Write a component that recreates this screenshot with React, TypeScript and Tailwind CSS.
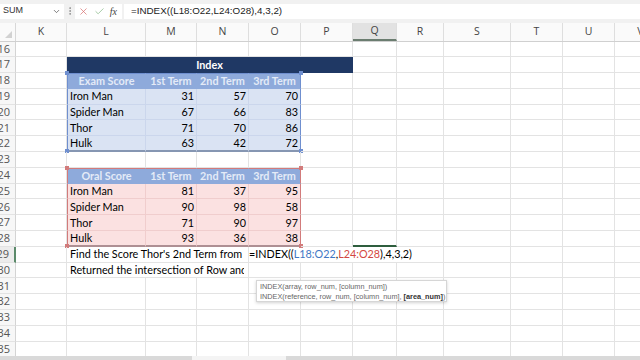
import type { ReactNode } from "react";
import clsx from "clsx";
import { twMerge } from "tailwind-merge";
import { X, Check, ChevronDown, EllipsisVertical } from "lucide-react";

const cn = (...a: (string | false | undefined)[]) => twMerge(clsx(a));

const W: Record<string, string> = {
  K: "w-[51px]",
  L: "w-[79px]",
  M: "w-[51px]",
  N: "w-[52px]",
  O: "w-[52px]",
  P: "w-[52px]",
  Q: "w-[44px]",
  R: "w-[47px]",
  S: "w-[67px]",
  T: "w-[52px]",
  U: "w-[52px]",
  V: "w-[52px]",
};
const COLS = Object.keys(W);

function Cell({ w, className, children }: { w: string; className?: string; children?: ReactNode }) {
  return (
    <div className={cn("relative shrink-0 h-full flex items-center border-r border-b border-[#e3e3e3] whitespace-nowrap", w, className)}>
      {children}
    </div>
  );
}

function blanks(keys: string[]) {
  return keys.map((k) => <Cell key={k} w={W[k]} />);
}

function Row({ n, children, active }: { n: number; children: ReactNode; active?: boolean }) {
  return (
    <div className="flex h-[15.8px]">
      <div
        className={cn(
          "shrink-0 w-[16px] h-full flex items-center justify-end pr-[5px] overflow-hidden bg-[#f7f7f7] border-r border-b border-r-[#d4d4d4] border-b-[#e3e3e3] text-[11px] text-[#555] font-['Open_Sans',sans-serif]",
          active && "border-r-2 border-r-[#5b8a6a] bg-[#ececec]"
        )}
      >
        {n}
      </div>
      {children}
    </div>
  );
}

type Theme = { body: string; line: string; edgeL: string; edgeR: string; edgeT: string; bottom: string; dot: string };

const blue: Theme = {
  body: "bg-[#dae3f3]",
  line: "border-[#cbd6ec]",
  edgeL: "border-l border-l-[#6f8fcf]",
  edgeR: "border-r border-r-[#6f8fcf]",
  edgeT: "border-t border-t-[#6f8fcf]",
  bottom: "border-b-2 border-b-[#8696b2]",
  dot: "bg-[#6f8fcf]",
};
const red: Theme = {
  body: "bg-[#fbe1e1]",
  line: "border-[#f0cdcd]",
  edgeL: "border-l border-l-[#d27b7b]",
  edgeR: "border-r border-r-[#d27b7b]",
  edgeT: "border-t border-t-[#d27b7b]",
  bottom: "border-b-2 border-b-[#ae8f93]",
  dot: "bg-[#d27b7b]",
};

function HeaderRow({ n, t, title }: { n: number; t: Theme; title: string }) {
  const labels = [title, "1st Term", "2nd Term", "3rd Term"];
  const keys = ["L", "M", "N", "O"];
  return (
    <Row n={n}>
      <Cell w={W.K} />
      {keys.map((k, i) => (
        <Cell
          key={k}
          w={W[k]}
          className={cn(
            "justify-center bg-[#8eaadb] border-[#8eaadb] font-bold text-[#e4ebf7]",
            t.edgeT,
            i === 0 && t.edgeL,
            i === 3 && t.edgeR
          )}
        >
          {labels[i]}
          {i === 0 && <span className={cn("absolute -left-[3px] -top-[3px] w-[4px] h-[4px]", t.dot)} />}
          {i === 3 && <span className={cn("absolute -right-[3px] -top-[3px] w-[4px] h-[4px]", t.dot)} />}
        </Cell>
      ))}
      {blanks(["P", "Q", "R", "S", "T", "U", "V"])}
    </Row>
  );
}

function DataRow({ n, t, name, vals, last, qLine }: { n: number; t: Theme; name: string; vals: number[]; last?: boolean; qLine?: boolean }) {
  return (
    <Row n={n}>
      <Cell w={W.K} />
      <Cell w={W.L} className={cn("pl-[2px]", t.body, t.line, t.edgeL, last && t.bottom)}>
        {name}
        {last && <span className={cn("absolute -left-[3px] -bottom-[3px] w-[4px] h-[4px]", t.dot)} />}
      </Cell>
      {vals.map((v, i) => (
        <Cell
          key={i}
          w={W[["M", "N", "O"][i]]}
          className={cn("justify-end pr-[2px]", t.body, t.line, i === 2 && t.edgeR, last && t.bottom)}
        >
          {v}
          {last && i === 2 && <span className={cn("absolute -right-[3px] -bottom-[3px] w-[4px] h-[4px]", t.dot)} />}
        </Cell>
      ))}
      <Cell w={W.P} />
      <Cell w={W.Q} className={cn(qLine && "border-b-2 border-b-[#2e5e3e]")} />
      {blanks(["R", "S", "T", "U", "V"])}
    </Row>
  );
}

const exam = [
  ["Iron Man", 31, 57, 70],
  ["Spider Man", 67, 66, 83],
  ["Thor", 71, 70, 86],
  ["Hulk", 63, 42, 72],
] as const;
const oral = [
  ["Iron Man", 81, 37, 95],
  ["Spider Man", 90, 98, 58],
  ["Thor", 71, 90, 97],
  ["Hulk", 93, 36, 38],
] as const;

export default function App() {
  return (
    <div className="relative w-[640px] h-[360px] overflow-hidden bg-white font-['Lato',sans-serif] text-[10.8px] text-black">
      {/* formula bar */}
      <div className="h-[23px] bg-[#f1f1f1] flex items-center pb-[1px]">
        <div className="w-[64px] h-[15px] bg-white flex items-center justify-between pl-[3px] pr-[3px] text-[9px] text-[#333] font-['Liberation_Sans',sans-serif]">
          SUM
          <ChevronDown size={9} strokeWidth={2} className="text-[#555]" />
        </div>
        <div className="w-[11px] flex justify-center text-[#888]">
          <EllipsisVertical size={10} strokeWidth={2} />
        </div>
        <div className="w-[47px] h-[15px] bg-white flex items-center justify-between pl-[3px] pr-[5px]">
          <X size={11} strokeWidth={1.5} className="text-[#d66a6a]" />
          <Check size={11} strokeWidth={1.5} className="text-[#7fb57f]" />
          <span className="italic text-[10px] text-[#444] font-['Liberation_Serif',serif]">fx</span>
        </div>
        <div className="ml-[2px] flex-1 h-[15px] bg-white flex items-center pl-[7px] text-[9.8px] text-[#222] font-['Liberation_Sans',sans-serif]">
          =INDEX((L18:O22,L24:O28),4,3,2)
        </div>
      </div>

      {/* column headers */}
      <div className="flex h-[18.5px] bg-[#fafafa] border-b border-[#d0d0d0] font-['Open_Sans',sans-serif] text-[10.5px] text-[#444]">
        <div className="shrink-0 w-[16px] h-full border-r border-[#d8d8d8] flex items-end justify-end">
          <svg width="8" height="8" viewBox="0 0 8 8" className="mb-[2px] mr-[2px]">
            <polygon points="7,0 7,7 0,7" fill="#d2d2d2" />
          </svg>
        </div>
        {COLS.map((k) => (
          <div
            key={k}
            className={cn(
              "shrink-0 h-full flex items-center justify-center border-r border-[#dedede]",
              W[k],
              k === "Q" && "bg-[#e2e2e2] border-b-2 border-b-[#6b7d70]"
            )}
          >
            {k}
          </div>
        ))}
      </div>

      {/* sheet body */}
      <div className="h-[314.5px] overflow-hidden">
        <Row n={16}>{blanks(COLS)}</Row>
        <Row n={17}>
          <Cell w={W.K} />
          <Cell w="w-[286px]" className="justify-center bg-[#1f3864] border-[#1f3864] text-white font-bold">
            Index
          </Cell>
          {blanks(["Q", "R", "S", "T", "U", "V"])}
        </Row>
        <HeaderRow n={18} t={blue} title="Exam Score" />
        {exam.map((r, i) => (
          <DataRow key={r[0]} n={19 + i} t={blue} name={r[0]} vals={[r[1], r[2], r[3]]} last={i === 3} />
        ))}
        <Row n={23}>{blanks(COLS)}</Row>
        <HeaderRow n={24} t={red} title="Oral Score" />
        {oral.map((r, i) => (
          <DataRow key={r[0]} n={25 + i} t={red} name={r[0]} vals={[r[1], r[2], r[3]]} last={i === 3} qLine={i === 3} />
        ))}
        <Row n={29} active>
          <Cell w={W.K} />
          <Cell w="w-[182px]" className="pl-[3px] overflow-hidden">
            Find the Score Thor's 2nd Term from
          </Cell>
          <Cell w="w-[195px]" className="pl-0 overflow-visible">
            <span>
              =INDEX((<span className="text-[#3f77c4]">L18:O22</span>,<span className="text-[#d4483f]">L24:O28</span>),4,3,2)
            </span>
          </Cell>
          {blanks(["S", "T", "U", "V"])}
        </Row>
        <Row n={30}>
          <Cell w={W.K} />
          <Cell w="w-[182px]" className="pl-[3px]">
            <span className="block w-[174px] overflow-hidden">Returned the intersection of Row and Column</span>
          </Cell>
          {blanks(["O", "P", "Q", "R", "S", "T", "U", "V"])}
        </Row>
        {[31, 32, 33, 34, 35, 36].map((n) => (
          <Row key={n} n={n}>
            {blanks(COLS)}
          </Row>
        ))}
      </div>

      {/* scrollbar strip */}
      <div className="h-[4px] flex bg-[#d9d9d9]">
        <div className="w-[192px]" />
        <div className="w-[94px] bg-[#f4f4f4]" />
      </div>

      {/* function tooltip */}
      <div className="absolute left-[256px] top-[280px] w-[191px] h-[22px] bg-white border border-[#d6d6d6] shadow-[0_1px_3px_rgba(0,0,0,0.18)] pl-[3px] pt-[1px] flex flex-col justify-center text-[7.3px] leading-[10px] text-[#666] font-['Liberation_Sans',sans-serif]">
        <div>INDEX(array, row_num, [column_num])</div>
        <div>
          INDEX(reference, row_num, [column_num], <span className="font-bold text-[#333]">[area_num]</span>)
        </div>
      </div>
    </div>
  );
}
